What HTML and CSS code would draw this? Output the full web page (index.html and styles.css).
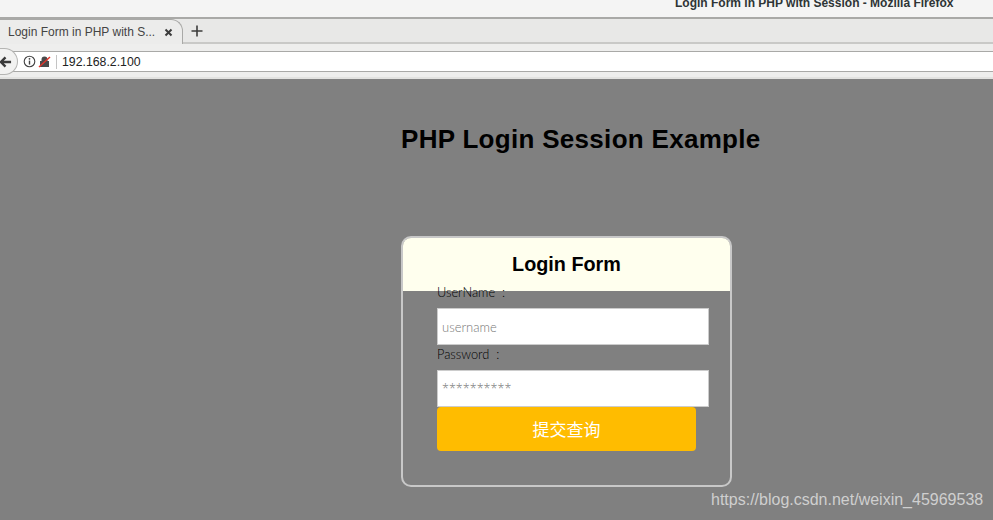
FILE: index.html
```html
<!DOCTYPE html>
<html lang="en">
<head>
<meta charset="utf-8">
<title>Login Form in PHP with Session</title>
<link rel="stylesheet" href="styles.css">
</head>
<body>
<header class="titlebar"><span class="window-title">Login Form in PHP with Session - Mozilla Firefox</span></header>
<div class="tabbar">
  <div class="tab">
    <span class="tab-label">Login Form in PHP with S...</span>
    <svg class="tab-close" width="9" height="9" viewBox="0 0 9 9"><path d="M1.5 1.5l6 6M7.5 1.5l-6 6" stroke="#3c3c3c" stroke-width="2"/></svg>
  </div>
  <svg class="new-tab" width="12" height="12" viewBox="0 0 12 12"><path d="M6 .5v11M.5 6h11" stroke="#3c3c3c" stroke-width="1.6"/></svg>
</div>
<nav class="navbar">
  <div class="urlbar">
    <span class="back">
      <svg width="14" height="14" viewBox="0 0 14 14"><path d="M7 2L2 7l5 5M2.5 7H13" fill="none" stroke="#3a3a3a" stroke-width="2.6"/></svg>
    </span>
    <svg class="info" width="13" height="13" viewBox="0 0 13 13"><circle cx="6.5" cy="6.5" r="5.3" fill="none" stroke="#444" stroke-width="1.1"/><path d="M6.5 5.6v4" stroke="#444" stroke-width="1.4"/><circle cx="6.5" cy="3.8" r=".9" fill="#444"/></svg>
    <svg class="lock" width="13" height="13" viewBox="0 0 13 13"><path d="M2 12V6h1.5V4.5a3 3 0 0 1 6 0V6H11v6z" fill="#4a4a4a"/><path d="M1 12L12 2" stroke="#e0352b" stroke-width="1.5"/></svg>
    <span class="sep"></span>
    <span class="url">192.168.2.100</span>
  </div>
</nav>
<main class="page">
  <h1 class="heading">PHP Login Session Example</h1>
  <section class="login">
    <h2 class="login-head">Login Form</h2>
    <form class="login-form">
      <label class="field-label" for="u">UserName &nbsp;:</label>
      <input class="field" id="u" type="text" placeholder="username">
      <label class="field-label pw" for="p">Password &nbsp;:</label>
      <input class="field field-secret" id="p" type="text" placeholder="**********">
      <button class="submit" type="button">提交查询</button>
    </form>
  </section>
</main>
<div class="watermark">https://blog.csdn.net/weixin_45969538</div>
</body>
</html>
```
FILE: styles.css
```css
* { box-sizing: border-box; }
html, body { margin: 0; height: 100%; }
body {
  width: 993px;
  height: 520px;
  overflow: hidden;
  background: #808080;
  font-family: "Liberation Sans", Arial, sans-serif;
  position: relative;
}
.titlebar {
  height: 19px;
  background: #f4f4f4;
  border-bottom: 2px solid #a9a9a7;
  overflow: hidden;
  padding-left: 675px;
}
.window-title {
  display: block;
  margin-top: -5px;
  font: bold 12px/16px "Liberation Sans", sans-serif;
  color: #2e3436;
  white-space: nowrap;
}
.tabbar {
  height: 25px;
  background: #e8e8e7;
  border-bottom: 2px solid #c9c9c7;
  display: flex;
  align-items: center;
}
.tab {
  width: 183px;
  height: 25px;
  margin-top: 2px;
  padding-left: 8px;
  display: flex;
  align-items: center;
  background: #ececeb;
  border: 1px solid #a9a9a7;
  border-left: 0;
  border-bottom: 0;
  border-radius: 0 12px 0 0;
}
.tab-label {
  font: 12px/16px "Liberation Sans", sans-serif;
  color: #444;
  width: 156px;
  white-space: nowrap;
}
.new-tab { margin-left: 8px; }
.navbar {
  height: 35px;
  background: #eeeeed;
  border-bottom: 2px solid #e2e2e0;
  padding-top: 7px;
}
.urlbar {
  height: 21px;
  background: #fff;
  border-top: 1px solid #a9a9a7;
  border-bottom: 1px solid #a9a9a7;
  display: flex;
  align-items: center;
}
.back {
  width: 19px;
  height: 27px;
  margin-left: -1px;
  background: #f2f2f1;
  border: 1px solid #b5b5b3;
  border-left: 0;
  border-radius: 0 14px 14px 0;
  display: flex;
  align-items: center;
  justify-content: flex-end;
  padding-right: 5px;
  flex: none;
}
.info { margin-left: 5px; }
.lock { margin-left: 2px; }
.sep { width: 1px; height: 14px; background: #c4c4c4; margin: 0 5px 0 5px; }
.url { font: 12.3px/16px "Liberation Sans", sans-serif; color: #222; }
.page { padding-left: 401px; }
.heading {
  margin: 0;
  padding-top: 43px;
  font: bold 26px/34px "Liberation Sans", sans-serif;
  color: #000;
  letter-spacing: .3px;
  white-space: nowrap;
}
.login {
  width: 331px;
  height: 251px;
  margin-top: 80px;
  border: 2px solid #c8c8c8;
  border-radius: 10px;
}
.login-head {
  margin: 0;
  height: 53px;
  background: #ffffee;
  border-radius: 8px 8px 0 0;
  font: bold 19.8px/53px "Liberation Sans", sans-serif;
  color: #000;
  text-align: center;
}
.login-form {
  margin-top: -7px;
  padding-left: 34px;
  display: flex;
  flex-direction: column;
  align-items: flex-start;
}
.field-label {
  height: 16px;
  font: 300 12.8px/16px Lato, sans-serif;
  color: #000;
}
.pw { margin-top: 0; height: 25px; line-height: 18px; }
.field {
  width: 272px;
  height: 37px;
  margin-top: 8px;
  padding: 0 4px;
  border: 1px solid #ccc;
  border-radius: 0;
  background: #fff;
  font: 300 13px Lato, sans-serif;
}
.pw + .field { margin-top: 0; }
.field-secret { font: 300 12.6px "Open Sans", sans-serif; }
.field::placeholder { color: #777; opacity: 1; }
.submit {
  width: 259px;
  height: 44px;
  border: 0;
  border-radius: 4px;
  background: #ffbc00;
  color: #fff;
  font: 17px/40px "Noto Sans CJK SC", sans-serif;
  padding: 0 0 1px;
}
.watermark {
  position: absolute;
  left: 711px;
  top: 489px;
  font: 16px/22px "Liberation Sans", sans-serif;
  color: #cfcfcf;
  white-space: nowrap;
}
```
